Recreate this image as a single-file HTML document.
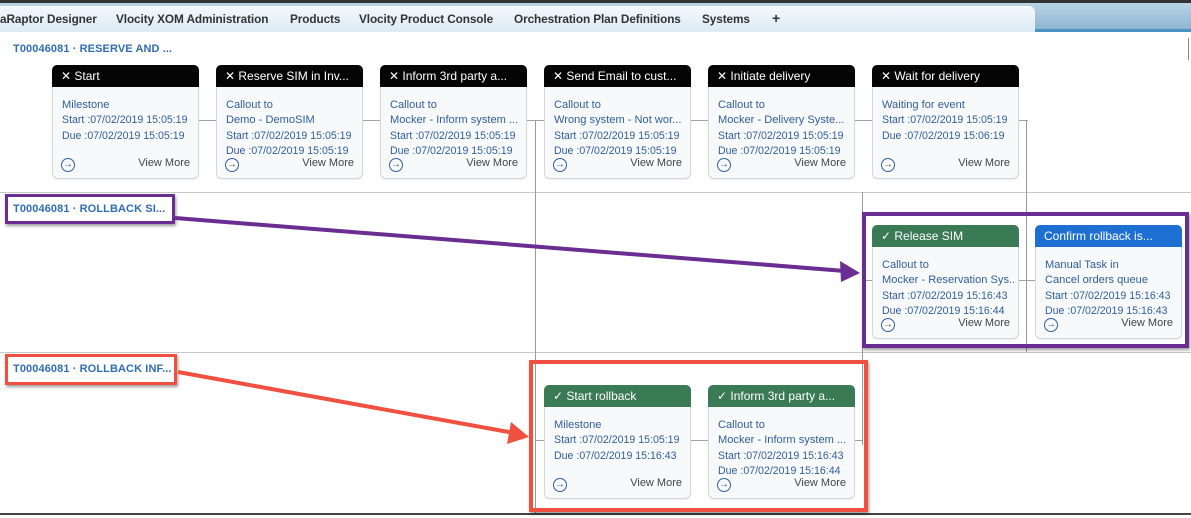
<!DOCTYPE html>
<html><head><meta charset="utf-8"><style>
*{margin:0;padding:0;box-sizing:border-box}
body{width:1191px;height:518px;overflow:hidden;background:#fff;position:relative;font-family:"Liberation Sans",Arial,sans-serif}
.nav{position:absolute;left:0;top:0;width:1191px;height:32px;background:linear-gradient(#b9d3e6,#8fb6d3);border-top:3px solid #333;border-bottom:3px solid #4b93c4}
.tabs{position:absolute;left:0;top:3px;width:1035px;height:26px;background:linear-gradient(#f3f8fc,#dcebf5);border-radius:0 6px 0 0}
.tabs span{position:absolute;top:6px;font-size:11.8px;font-weight:bold;color:#333;letter-spacing:-0.1px}
.ttl{position:absolute;font-size:11px;font-weight:bold;color:#2f6db5;letter-spacing:0.1px}
.hl{position:absolute;height:1px;background:#c8c8c8}
.vl{position:absolute;width:1px;background:#9a9a9a}
.cn{position:absolute;height:1px;background:#a0a0a0}
.card{position:absolute;width:147px;height:114px;background:#f8f9fa;border:1px solid #d6d8db;border-radius:6px;box-shadow:0 1px 1px rgba(0,0,0,.08)}
.hd{height:22px;border-radius:5px 5px 0 0;color:#fff;font-size:12px;line-height:22px;padding-left:9px;margin:-1px -1px 0 -1px;white-space:nowrap;overflow:hidden}
.k{background:#050505}.g{background:#3a7a54}.b{background:#1e6fd2}
.bd{padding:11px 0 0 9px;font-size:10.6px;line-height:15.4px;color:#2f5f9c;white-space:nowrap;overflow:hidden;margin-right:4px}
.bd .m{font-size:11.1px}
.ic{position:absolute;left:8px;bottom:6px;width:14px;height:14px;border:1.3px solid #2f5f9c;border-radius:50%;font-size:10px;line-height:11px;text-align:center;color:#2f5f9c}
.vm{position:absolute;right:8px;bottom:9px;font-size:11px;color:#444}
</style></head><body>
<div class="nav"><div class="tabs">
<span style="left:0">aRaptor Designer</span><span style="left:116px">Vlocity XOM Administration</span><span style="left:290px">Products</span><span style="left:359px">Vlocity Product Console</span><span style="left:514px">Orchestration Plan Definitions</span><span style="left:702px">Systems</span><span style="left:772px;font-size:14px;top:4px">+</span>
</div></div>
<div style="position:absolute;right:2px;top:38px;width:1px;height:22px;background:#888"></div>

<div class="ttl" style="left:13px;top:43px">T00046081 · RESERVE AND ...</div>
<div class="hl" style="left:0;top:192px;width:1191px"></div>
<div class="hl" style="left:0;top:352px;width:1191px"></div>
<div style="position:absolute;left:0;top:513px;width:1191px;height:2px;background:#444"></div>

<div class="vl" style="left:535px;top:120px;height:393px"></div>
<div class="vl" style="left:1026px;top:120px;height:232px"></div>
<div class="vl" style="left:862px;top:192px;height:253px"></div>
<div class="cn" style="left:198px;top:120px;width:830px"></div>
<div class="cn" style="left:1019px;top:280px;width:16px"></div>
<div class="cn" style="left:862px;top:280px;width:10px"></div>
<div class="cn" style="left:535px;top:440px;width:327px"></div>

<div class="card" style="left:52px;top:65px"><div class="hd k">✕ Start</div><div class="bd"><div class="m">Milestone</div>Start :07/02/2019 15:05:19<br>Due :07/02/2019 15:05:19</div><div class="ic">→</div><div class="vm">View More</div></div>
<div class="card" style="left:216px;top:65px"><div class="hd k">✕ Reserve SIM in Inv...</div><div class="bd"><div class="m">Callout to</div><div class="m">Demo - DemoSIM</div>Start :07/02/2019 15:05:19<br>Due :07/02/2019 15:05:19</div><div class="ic">→</div><div class="vm">View More</div></div>
<div class="card" style="left:380px;top:65px"><div class="hd k">✕ Inform 3rd party a...</div><div class="bd"><div class="m">Callout to</div><div class="m">Mocker - Inform system ...</div>Start :07/02/2019 15:05:19<br>Due :07/02/2019 15:05:19</div><div class="ic">→</div><div class="vm">View More</div></div>
<div class="card" style="left:544px;top:65px"><div class="hd k">✕ Send Email to cust...</div><div class="bd"><div class="m">Callout to</div><div class="m">Wrong system - Not wor...</div>Start :07/02/2019 15:05:19<br>Due :07/02/2019 15:05:19</div><div class="ic">→</div><div class="vm">View More</div></div>
<div class="card" style="left:708px;top:65px"><div class="hd k">✕ Initiate delivery</div><div class="bd"><div class="m">Callout to</div><div class="m">Mocker - Delivery Syste...</div>Start :07/02/2019 15:05:19<br>Due :07/02/2019 15:05:19</div><div class="ic">→</div><div class="vm">View More</div></div>
<div class="card" style="left:872px;top:65px"><div class="hd k">✕ Wait for delivery</div><div class="bd"><div class="m">Waiting for event</div>Start :07/02/2019 15:05:19<br>Due :07/02/2019 15:06:19</div><div class="ic">→</div><div class="vm">View More</div></div>

<div class="card" style="left:872px;top:225px"><div class="hd g">✓ Release SIM</div><div class="bd"><div class="m">Callout to</div><div class="m">Mocker - Reservation Sys...</div>Start :07/02/2019 15:16:43<br>Due :07/02/2019 15:16:44</div><div class="ic">→</div><div class="vm">View More</div></div>
<div class="card" style="left:1035px;top:225px"><div class="hd b">Confirm rollback is...</div><div class="bd"><div class="m">Manual Task in</div><div class="m">Cancel orders queue</div>Start :07/02/2019 15:16:43<br>Due :07/02/2019 15:16:43</div><div class="ic">→</div><div class="vm">View More</div></div>

<div class="card" style="left:544px;top:385px"><div class="hd g">✓ Start rollback</div><div class="bd"><div class="m">Milestone</div>Start :07/02/2019 15:05:19<br>Due :07/02/2019 15:16:43</div><div class="ic">→</div><div class="vm">View More</div></div>
<div class="card" style="left:708px;top:385px"><div class="hd g">✓ Inform 3rd party a...</div><div class="bd"><div class="m">Callout to</div><div class="m">Mocker - Inform system ...</div>Start :07/02/2019 15:16:43<br>Due :07/02/2019 15:16:44</div><div class="ic">→</div><div class="vm">View More</div></div>

<div style="position:absolute;left:5px;top:194px;width:170px;height:30px;border:3px solid #6a2d91;background:#fff;box-shadow:1px 2px 3px rgba(0,0,0,.4)"></div>
<div class="ttl" style="left:13px;top:203px">T00046081 · ROLLBACK SI...</div>
<div style="position:absolute;left:5px;top:354px;width:172px;height:31px;border:3px solid #f0503f;background:#fff;box-shadow:1px 2px 3px rgba(0,0,0,.4)"></div>
<div class="ttl" style="left:13px;top:363px">T00046081 · ROLLBACK INF...</div>
<div style="position:absolute;left:862px;top:212px;width:327px;height:136px;border:4px solid #6a2d91;box-shadow:1px 2px 3px rgba(0,0,0,.4)"></div>
<div style="position:absolute;left:529px;top:360px;width:339px;height:152px;border:4px solid #f0503f;box-shadow:1px 2px 3px rgba(0,0,0,.4)"></div>

<svg style="position:absolute;left:0;top:0" width="1191" height="518">
<line x1="175" y1="218" x2="845" y2="271" stroke="#6a2d91" stroke-width="4"/>
<polygon points="860,273 840,261 841,282" fill="#6a2d91"/>
<line x1="178" y1="372" x2="514" y2="433" stroke="#f0503f" stroke-width="4"/>
<polygon points="529,437 511,422 507,444" fill="#f0503f"/>
</svg>
</body></html>
